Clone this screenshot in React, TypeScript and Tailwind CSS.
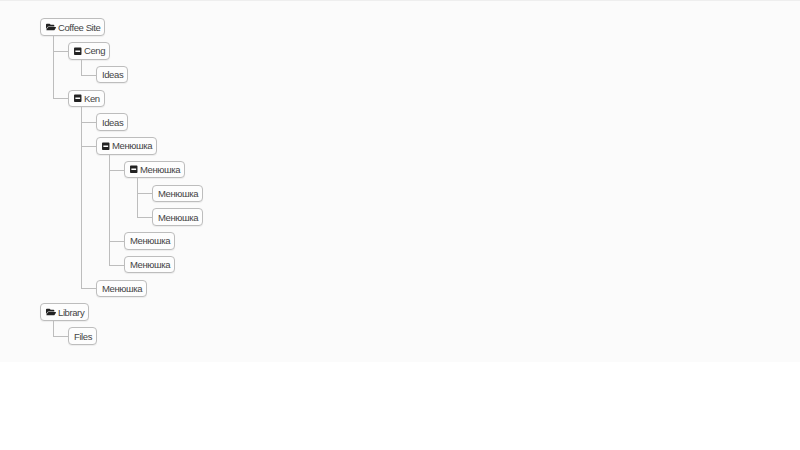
import { FaFolderOpen, FaMinusSquare } from 'react-icons/fa'

type TreeNode = {
  label: string
  icon?: 'folder' | 'minus'
  children?: TreeNode[]
}

const menu = 'Менюшка'

const tree: TreeNode[] = [
  {
    label: 'Coffee Site',
    icon: 'folder',
    children: [
      { label: 'Ceng', icon: 'minus', children: [{ label: 'Ideas' }] },
      {
        label: 'Ken',
        icon: 'minus',
        children: [
          { label: 'Ideas' },
          {
            label: menu,
            icon: 'minus',
            children: [
              { label: menu, icon: 'minus', children: [{ label: menu }, { label: menu }] },
              { label: menu },
              { label: menu },
            ],
          },
          { label: menu },
        ],
      },
    ],
  },
  { label: 'Library', icon: 'folder', children: [{ label: 'Files' }] },
]

function Label({ node }: { node: TreeNode }) {
  return (
    <span className="inline-flex h-[17.5px] items-center rounded-[4px] border border-[#bdbdbd] bg-[#fdfdfd] pl-[5px] pr-[4px] text-[9.5px] leading-none tracking-[-0.4px] text-[#444444] shadow-[0_1px_1px_rgba(0,0,0,0.06)]">
      {node.icon === 'folder' && <FaFolderOpen className="mr-[2px] h-[10px] w-[10px] text-[#222222]" />}
      {node.icon === 'minus' && <FaMinusSquare className="mr-[2.5px] h-[8.5px] w-[7.5px] text-[#222222]" />}
      <span className="pt-[0.5px]">{node.label}</span>
    </span>
  )
}

function Branch({ nodes, nested }: { nodes: TreeNode[]; nested?: boolean }) {
  return (
    <ul className={nested ? 'pl-[28px]' : ''}>
      {nodes.map((node, i) => (
        <li key={i} className={`relative ${i === 0 && !nested ? '' : 'pt-[6.27px]'}`}>
          {nested && (
            <>
              <span
                className={`absolute left-[-15px] top-0 w-px bg-[#bdbdbd] ${
                  i === nodes.length - 1 ? 'h-[15px]' : 'h-full'
                }`}
              />
              <span className="absolute left-[-15px] top-[15px] h-px w-[15px] bg-[#bdbdbd]" />
            </>
          )}
          <div className="flex">
            <Label node={node} />
          </div>
          {node.children && <Branch nodes={node.children} nested />}
        </li>
      ))}
    </ul>
  )
}

export default function App() {
  return (
    <div className="min-h-[450px] bg-white font-['Liberation_Sans',Arial,sans-serif]">
      <div className="border-t border-[#eeeeee] bg-[#fbfbfb] pb-[17px] pl-[40px] pt-[17.3px]">
        <Branch nodes={tree} />
      </div>
    </div>
  )
}
